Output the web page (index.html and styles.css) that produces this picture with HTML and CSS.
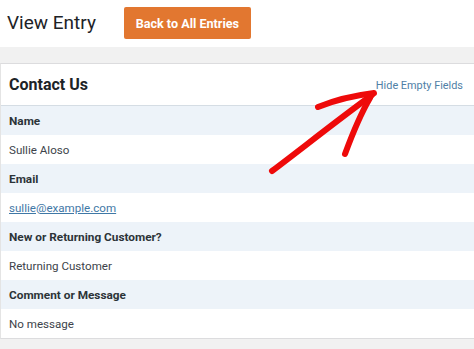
FILE: index.html
```html
<!DOCTYPE html>
<html>
<head>
<meta charset="utf-8">
<link rel="stylesheet" href="styles.css">
</head>
<body>
<div class="top">
  <h1 class="title">View Entry</h1>
  <a class="btn">Back to All Entries</a>
</div>
<div class="band"></div>
<div class="card">
  <div class="card-head">
    <h2 class="card-title">Contact Us</h2>
    <a class="hide-link">Hide Empty Fields</a>
  </div>
  <div class="row label">Name</div>
  <div class="row value">Sullie Aloso</div>
  <div class="row label">Email</div>
  <div class="row value"><a class="mail">sullie@example.com</a></div>
  <div class="row label">New or Returning Customer?</div>
  <div class="row value">Returning Customer</div>
  <div class="row label">Comment or Message</div>
  <div class="row value">No message</div>
</div>
<div class="band bottom"></div>
<svg class="arrow" width="474" height="349" viewBox="0 0 474 349">
  <path d="M272 171 C300 150 335 122 372 95" fill="none" stroke="#ee0a0a" stroke-width="6" stroke-linecap="round"/>
  <path d="M318 107 C335 100 350 96 374 93" fill="none" stroke="#ee0a0a" stroke-width="6" stroke-linecap="round"/>
  <path d="M345 154 C352 135 360 115 370 98" fill="none" stroke="#ee0a0a" stroke-width="6" stroke-linecap="round"/>
</svg>
</body>
</html>
```
FILE: styles.css
```css
html, body {
  margin: 0;
  padding: 0;
  background: #fff;
  font-family: Roboto, Inter, "Liberation Sans", sans-serif;
  color: #23282d;
  width: 474px;
  height: 349px;
  overflow: hidden;
  position: relative;
}
.top {
  height: 47px;
  display: flex;
  align-items: center;
  padding-left: 7px;
  gap: 28px;
}
.title {
  margin: 0;
  font-size: 19px;
  font-weight: 400;
  color: #1d2327;
  padding-bottom: 3px;
}
.btn {
  display: flex;
  align-items: center;
  justify-content: center;
  width: 127px;
  height: 32px;
  margin-bottom: 1px;
  background: #e27730;
  color: #fff;
  font-size: 12.6px;
  font-weight: 700;
  border-radius: 2px;
  box-sizing: border-box;
}
.band {
  height: 16px;
  background: #f1f1f1;
}
.band.bottom {
  height: 12px;
}
.card {
  border-top: 1px solid #dcdcde;
  border-bottom: 1px solid #dcdcde;
  border-left: 1px solid #e4e4e4;
  background: #fff;
}
.card-head {
  height: 41px;
  display: flex;
  align-items: center;
  justify-content: space-between;
  padding: 0 11px 0 8px;
  border-bottom: 1px solid #d5dde4;
}
.card-title {
  margin: 0;
  font-size: 16px;
  font-weight: 700;
  color: #1d2327;
}
.hide-link {
  font-size: 10.9px;
  color: #4f80a6;
  margin-top: 2px;
}
.row {
  height: 29px;
  display: flex;
  align-items: center;
  padding-left: 8px;
  font-size: 11.6px;
}
.row.label {
  background: #edf3f9;
  font-weight: 700;
  font-size: 11.8px;
  color: #2c3338;
}
.row.value {
  background: #fff;
  color: #3c434a;
}
.mail {
  color: #3f78a6;
  text-decoration: underline;
}
.arrow {
  position: absolute;
  left: 0;
  top: 0;
  pointer-events: none;
}
```
